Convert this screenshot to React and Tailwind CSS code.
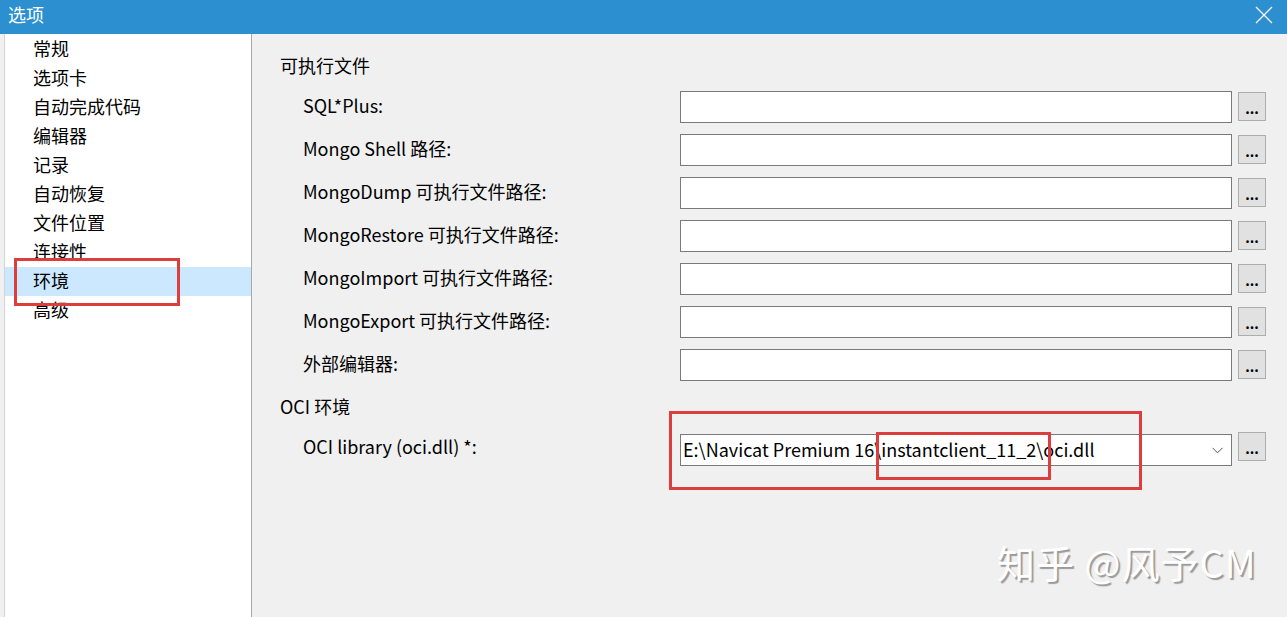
import React from "react";

const font = { fontFamily: '"Noto Sans CJK SC", "Noto Sans", sans-serif' };

const navItems = ["常规", "选项卡", "自动完成代码", "编辑器", "记录", "自动恢复", "文件位置", "连接性", "环境", "高级"];
const rows = [
  "SQL*Plus:",
  "Mongo Shell 路径:",
  "MongoDump 可执行文件路径:",
  "MongoRestore 可执行文件路径:",
  "MongoImport 可执行文件路径:",
  "MongoExport 可执行文件路径:",
  "外部编辑器:",
];

function DotsButton() {
  return (
    <div className="w-[28px] h-[29px] bg-[#e1e1e1] border border-[#adadad] flex items-center justify-center text-[14px] leading-none font-bold text-black pt-[2px]">
      ...
    </div>
  );
}

export default function App() {
  return (
    <div className="relative w-[1287px] h-[617px] overflow-hidden bg-[#f0f0f0] text-black" style={font}>
      <div className="h-[34px] bg-[#2b8fd0] flex items-center justify-between pl-[8px] pr-[12px]">
        <span className="text-white text-[18px] leading-none mb-[6px]">选项</span>
        <svg width="18" height="18" viewBox="0 0 18 18" className="mr-[2px] mb-[4px]">
          <path d="M1 1 L17 17 M17 1 L1 17" stroke="#ffffff" strokeWidth="1.3" fill="none" />
        </svg>
      </div>
      <div className="flex h-[583px]">
        <div className="w-[4px] bg-[#f0f0f0]" />
        <div className="w-[248px] bg-white border-l border-[#d4d4d4] border-r border-r-[#a8a8a8] pt-[1px]">
          {navItems.map((t) => (
            <div
              key={t}
              className={`h-[29px] flex items-center pl-[28px] text-[18px] leading-none ${t === "环境" ? "bg-[#cce8ff]" : ""}`}
            >
              <span className="mb-[4px]">{t}</span>
            </div>
          ))}
        </div>
        <div className="flex-1 pt-[19px] pl-[28px]">
          <div className="text-[18px] leading-[24px]">可执行文件</div>
          <div className="mt-[8px]">
            {rows.map((r) => (
              <div key={r} className="h-[43px] flex items-center">
                <div className="w-[400px] pl-[23px] text-[18px] leading-none mb-[4px]">{r}</div>
                <div className="w-[552px] h-[32px] bg-white border border-[#7a7a7a]" />
                <div className="ml-[6px]">
                  <DotsButton />
                </div>
              </div>
            ))}
          </div>
          <div className="mt-[8px] text-[18px] leading-[24px]">OCI 环境</div>
          <div className="mt-[15px] flex items-start">
            <div className="w-[400px] pl-[23px] text-[18px] leading-[26px]">OCI library (oci.dll) *:</div>
            <div className="mt-[1px] w-[552px] h-[32px] bg-white border border-[#7a7a7a] flex items-center justify-between pl-[2px] pr-[8px]">
              <span className="text-[18px] leading-none mb-[2px]">E:\Navicat Premium 16\instantclient_11_2\oci.dll</span>
              <svg width="11" height="7" viewBox="0 0 11 7">
                <path d="M0.5 0.8 L5.5 5.8 L10.5 0.8" stroke="#555" strokeWidth="1" fill="none" />
              </svg>
            </div>
            <div className="ml-[6px] -mt-[1px]">
              <DotsButton />
            </div>
          </div>
        </div>
      </div>

      <div className="absolute left-[14px] top-[258px] w-[166px] h-[48px] border-[3px] border-[#dc3d3d]" />
      <div className="absolute left-[669px] top-[411px] w-[473px] h-[79px] border-[3px] border-[#dc3d3d]" />
      <div className="absolute left-[876px] top-[432px] w-[175px] h-[48px] border-[3px] border-[#dc3d3d]" />

      <div
        className="absolute left-[997px] top-[537px] text-[38px] leading-[50px] text-white tracking-[1px]"
        style={{ textShadow: "2px 2px 1px #9a9a9a" }}
      >
        知乎 @风予CM
      </div>
    </div>
  );
}
